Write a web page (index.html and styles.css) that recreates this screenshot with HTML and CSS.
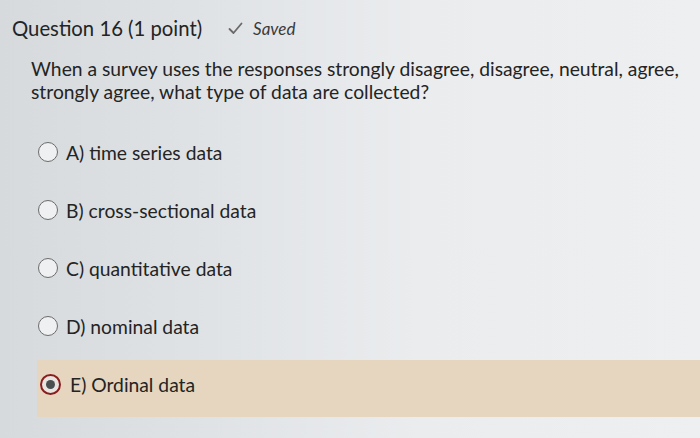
FILE: index.html
```html
<!DOCTYPE html>
<html>
<head>
<meta charset="utf-8">
<link rel="stylesheet" href="styles.css">
</head>
<body>
<div class="page">
  <div class="header">
    <h1 class="title">Question 16 (1 point)</h1>
    <span class="saved">
      <svg class="check" width="15" height="13" viewBox="0 0 15 13"><path d="M1.5 7 L5.5 11 L13.5 1.5" fill="none" stroke="#6a6a6a" stroke-width="1.8" stroke-linecap="round" stroke-linejoin="round"/></svg>
      <span class="saved-text">Saved</span>
    </span>
  </div>
  <p class="question">When a survey uses the responses strongly disagree, disagree, neutral, agree, strongly agree, what type of data are collected?</p>
  <div class="options">
    <div class="option"><span class="radio"></span><span class="label">A) time series data</span></div>
    <div class="option"><span class="radio"></span><span class="label">B) cross-sectional data</span></div>
    <div class="option"><span class="radio"></span><span class="label">C) quantitative data</span></div>
    <div class="option"><span class="radio"></span><span class="label">D) nominal data</span></div>
    <div class="option selected"><span class="radio"><span class="dot"></span></span><span class="label">E) Ordinal data</span></div>
  </div>
</div>
</body>
</html>
```
FILE: styles.css
```css
html, body {
  margin: 0;
  padding: 0;
}
body {
  width: 700px;
  height: 438px;
  overflow: hidden;
  background: linear-gradient(90deg, #d6dadd 0%, #e0e3e6 30%, #eaecee 60%, #eeeff1 100%);
  font-family: Lato, "Open Sans", sans-serif;
  color: #2b2b2b;
}
.page {
  padding: 14px 0 0 12px;
}
.header {
  display: flex;
  align-items: center;
  height: 28px;
}
.title {
  margin: 0;
  font-size: 20.3px;
  font-weight: 400;
  color: #242424;
}
.saved {
  display: flex;
  align-items: center;
  margin-left: 26px;
  gap: 10px;
}
.saved-text {
  font-style: italic;
  font-size: 17px;
  color: #3a3a3a;
}
.question {
  margin: 15px 0 0 19px;
  font-size: 19.3px;
  line-height: 23px;
  width: 680px;
  color: #242424;
}
.options {
  margin-top: 20px;
  display: flex;
  flex-direction: column;
}
.option {
  display: flex;
  align-items: center;
  height: 58px;
  padding-left: 26px;
  box-sizing: border-box;
}
.option.selected {
  margin-top: 5px;
  height: 57px;
  padding-bottom: 9px;
  margin-left: 25px;
  padding-left: 3px;
  background: #e6d6bf;
}
.radio {
  width: 20px;
  height: 20px;
  border: 1.5px solid #6b6b6b;
  border-radius: 50%;
  background: #eef0f1;
  box-sizing: border-box;
  display: flex;
  align-items: center;
  justify-content: center;
  flex-shrink: 0;
}
.selected .radio {
  width: 21px;
  height: 21px;
  border: 2.5px solid #8a1d1d;
  background: #e8e4df;
}
.dot {
  width: 9px;
  height: 9px;
  border-radius: 50%;
  background: #4a4f50;
}
.label {
  margin-left: 8px;
  font-size: 19.3px;
  color: #242424;
}
.selected .label {
  margin-left: 9px;
}
```
